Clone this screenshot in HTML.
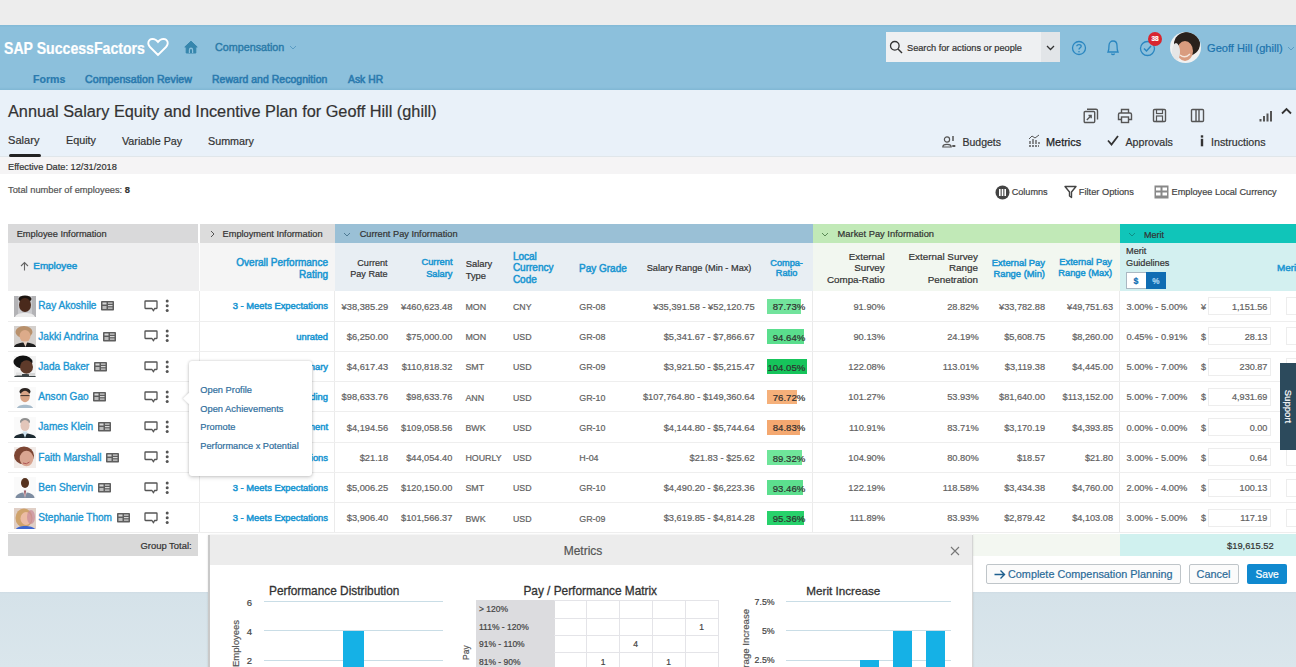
<!DOCTYPE html><html><head><meta charset="utf-8"><title>Compensation</title><style>
*{box-sizing:border-box;margin:0;padding:0}
html,body{width:1296px;height:667px;overflow:hidden;background:#fff;font-family:"Liberation Sans",sans-serif;color:#333}
.a{position:absolute;white-space:nowrap;-webkit-text-stroke:0.2px currentColor}
svg.a{overflow:visible}
</style></head><body>
<div class="a" style="left:0;top:0;width:1296px;height:25px;background:#ededed"></div>
<div class="a" style="left:0;top:25px;width:1296px;height:65px;background:linear-gradient(#82b9d6 0,#8cc0dc 2.5px,#8cc0dc 62px,#80b7d4 65px)"></div>
<div class="a " style="top:37.98px;font-size:16.5px;line-height:20.62px;color:#fff;font-weight:bold;left:4px;transform:scaleX(0.855);transform-origin:0 50%;">SAP SuccessFactors</div>
<svg class="a" style="left:147px;top:37px" width="22" height="20" viewBox="0 0 22 20"><path d="M11 18 L3 10 C0 7 1 2 5.5 1.8 C8 1.8 10 3.5 11 5 C12 3.5 14 1.8 16.5 1.8 C21 2 22 7 19 10 Z" fill="none" stroke="#fff" stroke-width="1.8"/></svg>
<svg class="a" style="left:184px;top:40px" width="14" height="14" viewBox="0 0 14 14"><path d="M0.8 7 L7 1.2 L13.2 7 L11.8 7 L11.8 13 L2.2 13 L2.2 7 Z" fill="#3686ad" stroke="#3686ad" stroke-width="1" stroke-linejoin="round"/><path d="M4.8 13 V10 Q4.8 7.6 7 7.6 Q9.2 7.6 9.2 10 V13 Z" fill="#8cc0dc"/><path d="M6 13 V10.2 Q6 9 7 9 Q8 9 8 10.2 V13 Z" fill="#3686ad"/></svg>
<div class="a " style="top:41.20px;font-size:10.75px;line-height:13.44px;color:#2a7aa8;left:215px;-webkit-text-stroke:0.4px #2a7aa8;">Compensation</div>
<svg class="a" style="left:289px;top:45px" width="8" height="5" viewBox="0 0 8 5"><path d="M1 1 L4 4 L7 1" fill="none" stroke="#5a9cc4" stroke-width="1"/></svg>
<div class="a " style="top:73.20px;font-size:10.6px;line-height:13.25px;color:#2a7aae;font-weight:bold;left:33px;">Forms</div>
<div class="a " style="top:73.20px;font-size:10.6px;line-height:13.25px;color:#2a7aae;left:85px;-webkit-text-stroke:0.55px #2a7aae;letter-spacing:0.05px;">Compensation Review</div>
<div class="a " style="top:73.29px;font-size:10.45px;line-height:13.06px;color:#2a7aae;left:212px;-webkit-text-stroke:0.55px #2a7aae;letter-spacing:0.05px;">Reward and Recognition</div>
<div class="a " style="top:73.98px;font-size:10.3px;line-height:12.88px;color:#2a7aae;left:348px;-webkit-text-stroke:0.55px #2a7aae;letter-spacing:0.05px;">Ask HR</div>
<div class="a" style="left:886px;top:32px;width:174px;height:30px;background:#eef0f2"></div>
<div class="a" style="left:1041px;top:32px;width:19px;height:30px;background:#e2e5e8"></div>
<svg class="a" style="left:889px;top:40px" width="14" height="14" viewBox="0 0 14 14"><circle cx="5.8" cy="5.8" r="4.3" fill="none" stroke="#333" stroke-width="1.3"/><path d="M9 9 L13 13" stroke="#333" stroke-width="1.5"/></svg>
<div class="a " style="top:42.96px;font-size:9.2px;line-height:11.5px;color:#333;left:907px;">Search for actions or people</div>
<svg class="a" style="left:1046px;top:44.5px" width="9" height="6" viewBox="0 0 9 6"><path d="M1 1 L4.5 4.5 L8 1" fill="none" stroke="#333" stroke-width="1.3"/></svg>
<svg class="a" style="left:1071px;top:39.5px" width="16" height="16" viewBox="0 0 16 16"><circle cx="8" cy="8" r="6.5" fill="none" stroke="#2a86c0" stroke-width="1.3"/><path d="M5.8 6.2 C5.8 4 10.2 4 10.2 6.2 C10.2 7.8 8 7.8 8 9.6" fill="none" stroke="#2a86c0" stroke-width="1.3"/><circle cx="8" cy="11.8" r="0.8" fill="#2a86c0"/></svg>
<svg class="a" style="left:1106px;top:39px" width="14" height="17" viewBox="0 0 14 17"><path d="M2 13 C3 11 3 9 3 6.5 C3 3.5 5 2 7 2 C9 2 11 3.5 11 6.5 C11 9 11 11 12 13 Z M5.5 14.5 C6 16 8 16 8.5 14.5" fill="none" stroke="#2a86c0" stroke-width="1.3"/></svg>
<svg class="a" style="left:1139px;top:39.5px" width="17" height="17" viewBox="0 0 17 17"><circle cx="8.5" cy="8.5" r="7" fill="none" stroke="#2a86c0" stroke-width="1.3"/><path d="M5 8.5 L7.5 11 L12 6" fill="none" stroke="#2a86c0" stroke-width="1.5"/></svg>
<div class="a" style="left:1148px;top:32px;width:14px;height:14px;border-radius:7px;background:#d9252f;color:#fff;font-size:6.5px;font-weight:bold;text-align:center;line-height:14px">38</div>
<svg class="a" style="left:1170px;top:32px" width="31" height="31" viewBox="0 0 31 31"><defs><clipPath id="cav"><circle cx="15.5" cy="15.5" r="15.5"/></clipPath></defs>
<g clip-path="url(#cav)"><rect width="31" height="31" fill="#f1f1f1"/><ellipse cx="17" cy="12" rx="13" ry="12" fill="#2a211c"/><ellipse cx="15" cy="19" rx="8" ry="10" fill="#d99c7f"/><path d="M10 23 Q15 27 20 22" stroke="#f5e6dc" stroke-width="1.6" fill="none"/><ellipse cx="6" cy="20" rx="4" ry="9" fill="#e6e6e6"/></g></svg>
<div class="a " style="top:41.79px;font-size:11.1px;line-height:13.88px;color:#1b73ad;left:1207px;">Geoff Hill (ghill)</div>
<svg class="a" style="left:1287px;top:46px" width="8" height="5" viewBox="0 0 8 5"><path d="M1 1 L4 4 L7 1" fill="none" stroke="#5a9cc4" stroke-width="1"/></svg>
<div class="a" style="left:0;top:90px;width:1296px;height:67px;background:#e9f1f9;border-bottom:1.5px solid #e0e6ea"></div>
<div class="a " style="top:101.10px;font-size:16.3px;line-height:20.38px;color:#333;left:8px;">Annual Salary Equity and Incentive Plan for Geoff Hill (ghill)</div>
<div class="a " style="top:134.29px;font-size:11.1px;line-height:13.88px;color:#333;left:8px;">Salary</div>
<div class="a " style="top:134.47px;font-size:10.8px;line-height:13.5px;color:#333;left:66px;">Equity</div>
<div class="a " style="top:134.50px;font-size:10.75px;line-height:13.44px;color:#333;left:122px;">Variable Pay</div>
<div class="a " style="top:134.50px;font-size:10.75px;line-height:13.44px;color:#333;left:208px;">Summary</div>
<div class="a" style="left:0;top:157px;width:1296px;height:17px;background:#f5f4f5"></div>
<div class="a" style="left:8.5px;top:154px;width:32px;height:3px;border-radius:1.5px;background:#222"></div>
<div class="a " style="top:161.72px;font-size:9.26px;line-height:11.57px;color:#333;left:8px;">Effective Date: 12/31/2018</div>
<div class="a " style="top:185.30px;font-size:9.3px;line-height:11.62px;color:#555;left:8px;">Total number of employees: <b style="color:#333">8</b></div>

<svg class="a" style="left:1083px;top:108px" width="16" height="16" viewBox="0 0 16 16"><rect x="1.2" y="3.5" width="10.5" height="11" rx="1" fill="none" stroke="#555" stroke-width="1.4"/><path d="M4 1.2 H13 Q14.5 1.2 14.5 2.7 V11.5" fill="none" stroke="#555" stroke-width="1.4"/><path d="M3.8 12 L8 7.8 M5.5 7.5 H8.2 V10.2" fill="none" stroke="#555" stroke-width="1.3"/></svg>
<svg class="a" style="left:1117px;top:108px" width="16" height="16" viewBox="0 0 16 16"><path d="M4.5 5 V1.5 H11.5 V5" fill="none" stroke="#555" stroke-width="1.4"/><path d="M4 11.5 H1.5 V6.5 Q1.5 5 3 5 H13 Q14.5 5 14.5 6.5 V11.5 H12" fill="none" stroke="#555" stroke-width="1.4"/><rect x="4.5" y="9" width="7" height="5.5" fill="none" stroke="#555" stroke-width="1.4"/></svg>
<svg class="a" style="left:1152px;top:108px" width="15" height="15" viewBox="0 0 15 15"><rect x="1.5" y="1.5" width="12" height="12" rx="1" fill="none" stroke="#555" stroke-width="1.4"/><rect x="4.5" y="1.5" width="6" height="4" fill="none" stroke="#555" stroke-width="1.2"/><rect x="4.5" y="8" width="6" height="5.5" fill="none" stroke="#555" stroke-width="1.2"/></svg>
<svg class="a" style="left:1190px;top:108px" width="15" height="15" viewBox="0 0 15 15"><rect x="1.5" y="1.5" width="12" height="12" rx="1" fill="none" stroke="#555" stroke-width="1.4"/><path d="M6 2 V13 M9 2 V13" fill="none" stroke="#555" stroke-width="1.4"/></svg>
<svg class="a" style="left:1259px;top:110px" width="13" height="12" viewBox="0 0 13 12"><rect x="0.5" y="9" width="2" height="2.5" fill="#555"/><rect x="4" y="6" width="2" height="5.5" fill="#555"/><rect x="7.5" y="3.5" width="2" height="8" fill="#555"/><rect x="11" y="1" width="2" height="10.5" fill="#555"/></svg>
<svg class="a" style="left:1281px;top:107px" width="11" height="8" viewBox="0 0 11 8"><path d="M1 6.5 L5.5 2 L10 6.5" fill="none" stroke="#333" stroke-width="1.8"/></svg>
<svg class="a" style="left:942px;top:135px" width="14" height="13" viewBox="0 0 14 13"><circle cx="5" cy="4.5" r="2.6" fill="none" stroke="#555" stroke-width="1.2"/><path d="M0.8 12 C0.8 8.5 9.2 8.5 9.2 12 Z" fill="none" stroke="#555" stroke-width="1.2"/><path d="M11 1 V6" stroke="#555" stroke-width="1.5"/><rect x="10.3" y="10" width="3" height="2" fill="#555"/></svg>
<svg class="a" style="left:1027px;top:134px" width="14" height="14" viewBox="0 0 14 14"><path d="M2 12 H12" stroke="#555" stroke-width="1.5" stroke-dasharray="2 1"/><path d="M3 10 L3 7 M6 10 L6 5 M9 10 L9 6 M12 10 L12 8" stroke="#555" stroke-width="1.3"/><path d="M2 5 L5 2 L8 4 L12 1" fill="none" stroke="#555" stroke-width="1"/></svg>
<svg class="a" style="left:1107px;top:135px" width="12" height="11" viewBox="0 0 12 11"><path d="M1 5.5 L4.5 9.5 L11 1" fill="none" stroke="#333" stroke-width="1.8"/></svg>
<svg class="a" style="left:1199px;top:135px" width="6" height="12" viewBox="0 0 6 12"><rect x="1.8" y="0.3" width="2.4" height="2.3" fill="#333"/><rect x="1.8" y="3.8" width="2.4" height="7.5" fill="#333"/></svg>
<svg class="a" style="left:995px;top:185px" width="15" height="15" viewBox="0 0 15 15"><circle cx="7.5" cy="7.5" r="7" fill="#444"/><rect x="4" y="4" width="1.6" height="7" fill="#fff"/><rect x="6.7" y="4" width="1.6" height="7" fill="#fff"/><rect x="9.4" y="4" width="1.6" height="7" fill="#fff"/></svg>
<svg class="a" style="left:1064px;top:185px" width="13" height="14" viewBox="0 0 13 14"><path d="M1 1.5 H12 L7.5 7 V12.5 L5.5 11 V7 Z" fill="none" stroke="#444" stroke-width="1.4" stroke-linejoin="round"/></svg>
<svg class="a" style="left:1154px;top:185px" width="15" height="14" viewBox="0 0 15 14"><rect x="0.5" y="0.5" width="14" height="13" fill="#888"/><rect x="2" y="2.5" width="4.5" height="3" fill="#fff"/><rect x="8.5" y="2.5" width="4.5" height="3" fill="#fff"/><rect x="2" y="7.5" width="4.5" height="3" fill="#fff"/><rect x="8.5" y="7.5" width="4.5" height="3" fill="#fff"/></svg>

<div class="a " style="top:136.16px;font-size:10.5px;line-height:13.12px;color:#333;left:962.5px;">Budgets</div>
<div class="a " style="top:135.92px;font-size:10.9px;line-height:13.62px;color:#222;left:1046px;-webkit-text-stroke:0.25px #222;">Metrics</div>
<div class="a " style="top:136.05px;font-size:10.68px;line-height:13.35px;color:#333;left:1125.5px;">Approvals</div>
<div class="a " style="top:136.05px;font-size:10.68px;line-height:13.35px;color:#333;left:1211px;">Instructions</div>
<div class="a " style="top:187.20px;font-size:9.12px;line-height:11.4px;color:#444;left:1011.7px;">Columns</div>
<div class="a " style="top:187.11px;font-size:9.28px;line-height:11.6px;color:#444;left:1078.8px;">Filter Options</div>
<div class="a " style="top:187.16px;font-size:9.2px;line-height:11.5px;color:#444;left:1171.5px;">Employee Local Currency</div>
<div class="a" style="left:8px;top:224px;width:190px;height:19px;background:#d9d9da"></div>
<div class="a" style="left:199px;top:224px;width:136px;height:19px;background:#dcdcdc"></div>
<div class="a" style="left:335px;top:224px;width:478px;height:19px;background:#9ac0d6"></div>
<div class="a" style="left:813px;top:224px;width:307px;height:19px;background:#c1e9b7"></div>
<div class="a" style="left:1120px;top:224px;width:176px;height:19px;background:#10c5b9"></div>
<div class="a " style="top:229.43px;font-size:9.25px;line-height:11.56px;color:#333;left:16.7px;">Employee Information</div>
<div class="a " style="top:229.44px;font-size:9.23px;line-height:11.54px;color:#333;left:222.6px;">Employment Information</div>
<div class="a " style="top:229.44px;font-size:9.23px;line-height:11.54px;color:#333;left:359.7px;">Current Pay Information</div>
<div class="a " style="top:229.38px;font-size:9.33px;line-height:11.66px;color:#333;left:837.6px;">Market Pay Information</div>
<div class="a " style="top:229.58px;font-size:9.0px;line-height:11.25px;color:#333;left:1144px;">Merit</div>
<svg class="a" style="left:209.5px;top:230px" width="5" height="8" viewBox="0 0 5 8"><path d="M1 1 L4 4 L1 7" fill="none" stroke="#555" stroke-width="1"/></svg>
<svg class="a" style="left:343px;top:231.5px" width="8" height="5" viewBox="0 0 8 5"><path d="M1 1 L4 4 L7 1" fill="none" stroke="#4d7a94" stroke-width="1"/></svg>
<svg class="a" style="left:821px;top:231.5px" width="8" height="5" viewBox="0 0 8 5"><path d="M1 1 L4 4 L7 1" fill="none" stroke="#5a8a55" stroke-width="1"/></svg>
<svg class="a" style="left:1128px;top:231.5px" width="8" height="5" viewBox="0 0 8 5"><path d="M1 1 L4 4 L7 1" fill="none" stroke="#0d8f86" stroke-width="1"/></svg>
<div class="a" style="left:8px;top:243px;width:191px;height:48px;background:#efeff0"></div>
<div class="a" style="left:199px;top:243px;width:136px;height:48px;background:#f5f5f5"></div>
<div class="a" style="left:335px;top:243px;width:478px;height:48px;background:#e8eef3"></div>
<div class="a" style="left:813px;top:243px;width:307px;height:48px;background:#f2f7f0"></div>
<div class="a" style="left:1120px;top:243px;width:176px;height:48px;background:#d3f0f0"></div>
<div class="a" style="left:198.5px;top:224px;width:1px;height:67px;background:#fff"></div>
<svg class="a" style="left:20px;top:261px" width="9" height="10" viewBox="0 0 9 10"><path d="M4.5 9.5 V1.5 M1 5 L4.5 1.5 L8 5" fill="none" stroke="#666" stroke-width="1.1"/></svg>
<div class="a " style="top:260.32px;font-size:9.9px;line-height:12.38px;color:#1a96d2;left:33.3px;-webkit-text-stroke:0.5px #1a96d2;">Employee</div>
<div class="a " style="top:256.97px;font-size:10.0px;line-height:12.5px;color:#1a96d2;right:968.00px;text-align:right;-webkit-text-stroke:0.5px #1a96d2;">Overall Performance</div>
<div class="a " style="top:268.57px;font-size:10.0px;line-height:12.5px;color:#1a96d2;right:968.00px;text-align:right;-webkit-text-stroke:0.5px #1a96d2;">Rating</div>
<div class="a " style="top:257.51px;font-size:9.1px;line-height:11.38px;color:#333;right:908.40px;text-align:right;">Current</div>
<div class="a " style="top:269.11px;font-size:9.1px;line-height:11.38px;color:#333;right:908.40px;text-align:right;">Pay Rate</div>
<div class="a " style="top:257.40px;font-size:9.3px;line-height:11.62px;color:#1a96d2;right:843.50px;text-align:right;-webkit-text-stroke:0.5px #1a96d2;">Current</div>
<div class="a " style="top:269.00px;font-size:9.3px;line-height:11.62px;color:#1a96d2;right:843.50px;text-align:right;-webkit-text-stroke:0.5px #1a96d2;">Salary</div>
<div class="a " style="top:257.63px;font-size:9.4px;line-height:11.75px;color:#333;left:465.7px;">Salary</div>
<div class="a " style="top:269.63px;font-size:9.4px;line-height:11.75px;color:#333;left:465.7px;">Type</div>
<div class="a " style="top:250.66px;font-size:10.0px;line-height:12.5px;color:#1a96d2;left:512.9px;-webkit-text-stroke:0.5px #1a96d2;">Local</div>
<div class="a " style="top:262.17px;font-size:10.0px;line-height:12.5px;color:#1a96d2;left:512.9px;-webkit-text-stroke:0.5px #1a96d2;">Currency</div>
<div class="a " style="top:273.67px;font-size:10.0px;line-height:12.5px;color:#1a96d2;left:512.9px;-webkit-text-stroke:0.5px #1a96d2;">Code</div>
<div class="a " style="top:262.97px;font-size:10.0px;line-height:12.5px;color:#1a96d2;left:579px;-webkit-text-stroke:0.5px #1a96d2;">Pay Grade</div>
<div class="a " style="top:263.46px;font-size:9.2px;line-height:11.5px;color:#333;right:544.60px;text-align:right;">Salary Range (Min - Max)</div>
<div class="a " style="top:257.76px;font-size:9.2px;line-height:11.5px;color:#1a96d2;left:636.60px;width:300px;text-align:center;-webkit-text-stroke:0.5px #1a96d2;">Compa-</div>
<div class="a " style="top:268.46px;font-size:9.2px;line-height:11.5px;color:#1a96d2;left:636.60px;width:300px;text-align:center;-webkit-text-stroke:0.5px #1a96d2;">Ratio</div>
<div class="a " style="top:250.59px;font-size:9.8px;line-height:12.25px;color:#333;right:411.30px;text-align:right;">External</div>
<div class="a " style="top:262.09px;font-size:9.8px;line-height:12.25px;color:#333;right:411.30px;text-align:right;">Survey</div>
<div class="a " style="top:273.59px;font-size:9.8px;line-height:12.25px;color:#333;right:411.30px;text-align:right;">Compa-Ratio</div>
<div class="a " style="top:250.56px;font-size:9.85px;line-height:12.31px;color:#333;right:318.00px;text-align:right;">External Survey</div>
<div class="a " style="top:262.06px;font-size:9.85px;line-height:12.31px;color:#333;right:318.00px;text-align:right;">Range</div>
<div class="a " style="top:273.56px;font-size:9.85px;line-height:12.31px;color:#333;right:318.00px;text-align:right;">Penetration</div>
<div class="a " style="top:256.63px;font-size:9.4px;line-height:11.75px;color:#1a96d2;right:251.00px;text-align:right;-webkit-text-stroke:0.5px #1a96d2;">External Pay</div>
<div class="a " style="top:267.93px;font-size:9.4px;line-height:11.75px;color:#1a96d2;right:251.00px;text-align:right;-webkit-text-stroke:0.5px #1a96d2;">Range (Min)</div>
<div class="a " style="top:256.70px;font-size:9.3px;line-height:11.62px;color:#1a96d2;right:184.00px;text-align:right;-webkit-text-stroke:0.5px #1a96d2;">External Pay</div>
<div class="a " style="top:268.00px;font-size:9.3px;line-height:11.62px;color:#1a96d2;right:184.00px;text-align:right;-webkit-text-stroke:0.5px #1a96d2;">Range (Max)</div>
<div class="a " style="top:246.46px;font-size:9.2px;line-height:11.5px;color:#333;left:1126px;">Merit</div>
<div class="a " style="top:257.76px;font-size:9.2px;line-height:11.5px;color:#333;left:1126px;">Guidelines</div>
<div class="a " style="top:262.02px;font-size:9.9px;line-height:12.38px;color:#1a96d2;left:1277px;-webkit-text-stroke:0.5px #1a96d2;">Merit</div>
<div class="a" style="left:1126px;top:272px;width:40px;height:17px;border:1px solid #aab8c2;background:#fff"></div>
<div class="a" style="left:1146px;top:272px;width:20px;height:17px;background:#0f6db3"></div>
<div class="a " style="top:276.20px;font-size:8.8px;line-height:11.0px;color:#0f6db3;font-weight:bold;left:986.00px;width:300px;text-align:center;">$</div>
<div class="a " style="top:276.57px;font-size:8.2px;line-height:10.25px;color:#a8d4f0;font-weight:bold;left:1006.00px;width:300px;text-align:center;">%</div>
<div class="a" style="left:199px;top:291px;width:1px;height:242.00px;background:#ebebeb"></div>
<div class="a" style="left:334px;top:291px;width:1px;height:242.00px;background:#ebebeb"></div>
<div class="a" style="left:812px;top:291px;width:1px;height:242.00px;background:#ebebeb"></div>
<div class="a" style="left:1119px;top:291px;width:1px;height:242.00px;background:#ebebeb"></div>
<div class="a" style="left:8px;top:320.65px;width:1288px;height:1px;background:#eeeeee"></div>
<svg class="a" style="left:14px;top:295.82px" width="22" height="21" viewBox="0 0 22 21"><rect width="22" height="21" fill="#b3b3b6"/><rect x="4" y="0" width="14" height="21" fill="#c9c9cc"/><ellipse cx="11" cy="3" rx="6.5" ry="3.5" fill="#1c1410"/><ellipse cx="11" cy="9" rx="6" ry="7" fill="#4a2a1c"/><path d="M1 21 C2 15.5 20 15.5 21 21 Z" fill="#ececec"/></svg>
<div class="a " style="top:300.25px;font-size:10.07px;line-height:12.59px;color:#1a96d2;left:38.3px;-webkit-text-stroke:0.35px #1a96d2;">Ray Akoshile</div>
<svg class="a" style="left:101.01px;top:301.32px" width="13" height="10" viewBox="0 0 13 10"><rect x="0" y="0" width="13" height="9.5" rx="0.8" fill="#5e5e5e"/><rect x="1.5" y="1.5" width="4" height="2" fill="#d8d8d8"/><rect x="1.5" y="5" width="4" height="3" fill="#bdbdbd"/><rect x="7" y="1.5" width="4.5" height="1.2" fill="#d8d8d8"/><rect x="7" y="4" width="4.5" height="1.2" fill="#d8d8d8"/><rect x="7" y="6.5" width="4.5" height="1.2" fill="#d8d8d8"/></svg>
<svg class="a" style="left:143.5px;top:300.12px" width="14" height="12" viewBox="0 0 14 12"><path d="M1.5 1 H12.5 Q13 1 13 1.5 V8 Q13 8.5 12.5 8.5 H10.5 L9.5 10.8 L8 8.5 H1.5 Q1 8.5 1 8 V1.5 Q1 1 1.5 1 Z" fill="none" stroke="#555" stroke-width="1.3" stroke-linejoin="round"/></svg>
<svg class="a" style="left:164.5px;top:299.12px" width="5" height="14" viewBox="0 0 5 14"><circle cx="2.2" cy="2" r="1.5" fill="#555"/><circle cx="2.2" cy="6.7" r="1.5" fill="#555"/><circle cx="2.2" cy="11.4" r="1.5" fill="#555"/></svg>
<div class="a " style="top:301.48px;font-size:9.37px;line-height:11.71px;color:#1a96d2;right:968.00px;text-align:right;-webkit-text-stroke:0.5px #1a96d2;">3 - Meets Expectations</div>
<div class="a " style="top:301.52px;font-size:9.3px;line-height:11.62px;color:#626262;right:907.90px;text-align:right;">¥38,385.29</div>
<div class="a " style="top:301.57px;font-size:9.22px;line-height:11.53px;color:#626262;right:843.70px;text-align:right;">¥460,623.48</div>
<div class="a " style="top:301.77px;font-size:8.9px;line-height:11.12px;color:#626262;left:465.4px;">MON</div>
<div class="a " style="top:301.83px;font-size:8.8px;line-height:11.0px;color:#626262;left:513px;">CNY</div>
<div class="a " style="top:301.77px;font-size:8.9px;line-height:11.12px;color:#626262;left:579.3px;">GR-08</div>
<div class="a " style="top:301.52px;font-size:9.3px;line-height:11.62px;color:#626262;right:541.40px;text-align:right;">¥35,391.58 - ¥52,120.75</div>
<div class="a" style="left:766.8px;top:298.82px;width:34.4px;height:14.8px;background:#72e39c"></div>
<div class="a " style="top:301.34px;font-size:9.6px;line-height:12.0px;color:#2f2f2f;right:490.70px;text-align:right;">87.73%</div>
<div class="a " style="top:301.52px;font-size:9.3px;line-height:11.62px;color:#626262;right:411.00px;text-align:right;">91.90%</div>
<div class="a " style="top:301.52px;font-size:9.3px;line-height:11.62px;color:#626262;right:317.30px;text-align:right;">28.82%</div>
<div class="a " style="top:301.58px;font-size:9.2px;line-height:11.5px;color:#626262;right:251.00px;text-align:right;">¥33,782.88</div>
<div class="a " style="top:301.58px;font-size:9.2px;line-height:11.5px;color:#626262;right:183.00px;text-align:right;">¥49,751.63</div>
<div class="a " style="top:301.52px;font-size:9.3px;line-height:11.62px;color:#626262;left:1126.4px;">3.00% - 5.00%</div>
<div class="a " style="top:301.70px;font-size:9.0px;line-height:11.25px;color:#626262;left:1201px;">¥</div>
<div class="a" style="left:1208px;top:297.12px;width:63px;height:18px;border:1px solid #ededed;background:#fff"></div>
<div class="a " style="top:301.64px;font-size:9.1px;line-height:11.38px;color:#626262;right:28.60px;text-align:right;">1,151.56</div>
<div class="a" style="left:1286px;top:297.12px;width:20px;height:18px;border:1px solid #ededed;background:#fff"></div>
<div class="a" style="left:8px;top:350.90px;width:1288px;height:1px;background:#eeeeee"></div>
<svg class="a" style="left:14px;top:326.07px" width="22" height="21" viewBox="0 0 22 21"><rect width="22" height="21" fill="#d4d0cd"/><ellipse cx="10" cy="6" rx="8.5" ry="6" fill="#b9916c"/><ellipse cx="11" cy="10" rx="5.5" ry="6" fill="#dcab8a"/><path d="M0 21 C1 15 21 15 22 21 Z" fill="#1f1f1f"/><path d="M9 15.5 L11.5 21 L13.5 15.5 Z" fill="#e6d2c4"/></svg>
<div class="a " style="top:330.50px;font-size:10.07px;line-height:12.59px;color:#1a96d2;left:38.3px;-webkit-text-stroke:0.35px #1a96d2;">Jakki Andrina</div>
<svg class="a" style="left:102.69px;top:331.57px" width="13" height="10" viewBox="0 0 13 10"><rect x="0" y="0" width="13" height="9.5" rx="0.8" fill="#5e5e5e"/><rect x="1.5" y="1.5" width="4" height="2" fill="#d8d8d8"/><rect x="1.5" y="5" width="4" height="3" fill="#bdbdbd"/><rect x="7" y="1.5" width="4.5" height="1.2" fill="#d8d8d8"/><rect x="7" y="4" width="4.5" height="1.2" fill="#d8d8d8"/><rect x="7" y="6.5" width="4.5" height="1.2" fill="#d8d8d8"/></svg>
<svg class="a" style="left:143.5px;top:330.38px" width="14" height="12" viewBox="0 0 14 12"><path d="M1.5 1 H12.5 Q13 1 13 1.5 V8 Q13 8.5 12.5 8.5 H10.5 L9.5 10.8 L8 8.5 H1.5 Q1 8.5 1 8 V1.5 Q1 1 1.5 1 Z" fill="none" stroke="#555" stroke-width="1.3" stroke-linejoin="round"/></svg>
<svg class="a" style="left:164.5px;top:329.38px" width="5" height="14" viewBox="0 0 5 14"><circle cx="2.2" cy="2" r="1.5" fill="#555"/><circle cx="2.2" cy="6.7" r="1.5" fill="#555"/><circle cx="2.2" cy="11.4" r="1.5" fill="#555"/></svg>
<div class="a " style="top:331.73px;font-size:9.37px;line-height:11.71px;color:#1a96d2;right:968.00px;text-align:right;-webkit-text-stroke:0.5px #1a96d2;">unrated</div>
<div class="a " style="top:331.77px;font-size:9.3px;line-height:11.62px;color:#626262;right:907.90px;text-align:right;">$6,250.00</div>
<div class="a " style="top:331.82px;font-size:9.22px;line-height:11.53px;color:#626262;right:843.70px;text-align:right;">$75,000.00</div>
<div class="a " style="top:332.02px;font-size:8.9px;line-height:11.12px;color:#626262;left:465.4px;">MON</div>
<div class="a " style="top:332.08px;font-size:8.8px;line-height:11.0px;color:#626262;left:513px;">USD</div>
<div class="a " style="top:332.02px;font-size:8.9px;line-height:11.12px;color:#626262;left:579.3px;">GR-08</div>
<div class="a " style="top:331.77px;font-size:9.3px;line-height:11.62px;color:#626262;right:541.40px;text-align:right;">$5,341.67 - $7,866.67</div>
<div class="a" style="left:766.8px;top:329.07px;width:37.1px;height:14.8px;background:#5ade8d"></div>
<div class="a " style="top:331.59px;font-size:9.6px;line-height:12.0px;color:#2f2f2f;right:490.70px;text-align:right;">94.64%</div>
<div class="a " style="top:331.77px;font-size:9.3px;line-height:11.62px;color:#626262;right:411.00px;text-align:right;">90.13%</div>
<div class="a " style="top:331.77px;font-size:9.3px;line-height:11.62px;color:#626262;right:317.30px;text-align:right;">24.19%</div>
<div class="a " style="top:331.83px;font-size:9.2px;line-height:11.5px;color:#626262;right:251.00px;text-align:right;">$5,608.75</div>
<div class="a " style="top:331.83px;font-size:9.2px;line-height:11.5px;color:#626262;right:183.00px;text-align:right;">$8,260.00</div>
<div class="a " style="top:331.77px;font-size:9.3px;line-height:11.62px;color:#626262;left:1126.4px;">0.45% - 0.91%</div>
<div class="a " style="top:331.95px;font-size:9.0px;line-height:11.25px;color:#626262;left:1201px;">$</div>
<div class="a" style="left:1208px;top:327.38px;width:63px;height:18px;border:1px solid #ededed;background:#fff"></div>
<div class="a " style="top:331.89px;font-size:9.1px;line-height:11.38px;color:#626262;right:28.60px;text-align:right;">28.13</div>
<div class="a" style="left:1286px;top:327.38px;width:20px;height:18px;border:1px solid #ededed;background:#fff"></div>
<div class="a" style="left:8px;top:381.15px;width:1288px;height:1px;background:#eeeeee"></div>
<svg class="a" style="left:14px;top:356.32px" width="22" height="21" viewBox="0 0 22 21"><rect width="22" height="21" fill="#f2f2f2"/><ellipse cx="9" cy="6" rx="9.5" ry="6.5" fill="#121212"/><ellipse cx="12.5" cy="11" rx="6.5" ry="6.8" fill="#5e3a2a"/><path d="M0 21 C2 17 20 17 22 21 Z" fill="#3a4244"/><rect x="2" y="16.5" width="6" height="3" fill="#e2e2e2"/><rect x="15" y="17" width="6" height="3" fill="#d5d5d5"/></svg>
<div class="a " style="top:360.75px;font-size:10.07px;line-height:12.59px;color:#1a96d2;left:38.3px;-webkit-text-stroke:0.35px #1a96d2;">Jada Baker</div>
<svg class="a" style="left:93.74px;top:361.82px" width="13" height="10" viewBox="0 0 13 10"><rect x="0" y="0" width="13" height="9.5" rx="0.8" fill="#5e5e5e"/><rect x="1.5" y="1.5" width="4" height="2" fill="#d8d8d8"/><rect x="1.5" y="5" width="4" height="3" fill="#bdbdbd"/><rect x="7" y="1.5" width="4.5" height="1.2" fill="#d8d8d8"/><rect x="7" y="4" width="4.5" height="1.2" fill="#d8d8d8"/><rect x="7" y="6.5" width="4.5" height="1.2" fill="#d8d8d8"/></svg>
<svg class="a" style="left:143.5px;top:360.62px" width="14" height="12" viewBox="0 0 14 12"><path d="M1.5 1 H12.5 Q13 1 13 1.5 V8 Q13 8.5 12.5 8.5 H10.5 L9.5 10.8 L8 8.5 H1.5 Q1 8.5 1 8 V1.5 Q1 1 1.5 1 Z" fill="none" stroke="#555" stroke-width="1.3" stroke-linejoin="round"/></svg>
<svg class="a" style="left:164.5px;top:359.62px" width="5" height="14" viewBox="0 0 5 14"><circle cx="2.2" cy="2" r="1.5" fill="#555"/><circle cx="2.2" cy="6.7" r="1.5" fill="#555"/><circle cx="2.2" cy="11.4" r="1.5" fill="#555"/></svg>
<div class="a " style="top:361.98px;font-size:9.37px;line-height:11.71px;color:#1a96d2;right:968.00px;text-align:right;-webkit-text-stroke:0.5px #1a96d2;">5 - Extraordinary</div>
<div class="a " style="top:362.02px;font-size:9.3px;line-height:11.62px;color:#626262;right:907.90px;text-align:right;">$4,617.43</div>
<div class="a " style="top:362.07px;font-size:9.22px;line-height:11.53px;color:#626262;right:843.70px;text-align:right;">$110,818.32</div>
<div class="a " style="top:362.27px;font-size:8.9px;line-height:11.12px;color:#626262;left:465.4px;">SMT</div>
<div class="a " style="top:362.33px;font-size:8.8px;line-height:11.0px;color:#626262;left:513px;">USD</div>
<div class="a " style="top:362.27px;font-size:8.9px;line-height:11.12px;color:#626262;left:579.3px;">GR-09</div>
<div class="a " style="top:362.02px;font-size:9.3px;line-height:11.62px;color:#626262;right:541.40px;text-align:right;">$3,921.50 - $5,215.47</div>
<div class="a" style="left:766.8px;top:359.32px;width:40.5px;height:14.8px;background:#16c45b"></div>
<div class="a " style="top:361.84px;font-size:9.6px;line-height:12.0px;color:#2f2f2f;right:490.70px;text-align:right;">104.05%</div>
<div class="a " style="top:362.02px;font-size:9.3px;line-height:11.62px;color:#626262;right:411.00px;text-align:right;">122.08%</div>
<div class="a " style="top:362.02px;font-size:9.3px;line-height:11.62px;color:#626262;right:317.30px;text-align:right;">113.01%</div>
<div class="a " style="top:362.08px;font-size:9.2px;line-height:11.5px;color:#626262;right:251.00px;text-align:right;">$3,119.38</div>
<div class="a " style="top:362.08px;font-size:9.2px;line-height:11.5px;color:#626262;right:183.00px;text-align:right;">$4,445.00</div>
<div class="a " style="top:362.02px;font-size:9.3px;line-height:11.62px;color:#626262;left:1126.4px;">5.00% - 7.00%</div>
<div class="a " style="top:362.20px;font-size:9.0px;line-height:11.25px;color:#626262;left:1201px;">$</div>
<div class="a" style="left:1208px;top:357.62px;width:63px;height:18px;border:1px solid #ededed;background:#fff"></div>
<div class="a " style="top:362.14px;font-size:9.1px;line-height:11.38px;color:#626262;right:28.60px;text-align:right;">230.87</div>
<div class="a" style="left:1286px;top:357.62px;width:20px;height:18px;border:1px solid #ededed;background:#fff"></div>
<div class="a" style="left:8px;top:411.40px;width:1288px;height:1px;background:#eeeeee"></div>
<svg class="a" style="left:14px;top:386.57px" width="22" height="21" viewBox="0 0 22 21"><rect width="22" height="21" fill="#fafafa"/><ellipse cx="11" cy="4.5" rx="5.5" ry="3.6" fill="#2b2421"/><ellipse cx="11" cy="9.5" rx="4.8" ry="5.8" fill="#d9a486"/><rect x="6.5" y="8" width="9" height="1.1" fill="#4a3a33"/><path d="M3 21 C4 16.5 18 16.5 19 21 Z" fill="#a8bccb"/></svg>
<div class="a " style="top:391.00px;font-size:10.07px;line-height:12.59px;color:#1a96d2;left:38.3px;-webkit-text-stroke:0.35px #1a96d2;">Anson Gao</div>
<svg class="a" style="left:93.18px;top:392.07px" width="13" height="10" viewBox="0 0 13 10"><rect x="0" y="0" width="13" height="9.5" rx="0.8" fill="#5e5e5e"/><rect x="1.5" y="1.5" width="4" height="2" fill="#d8d8d8"/><rect x="1.5" y="5" width="4" height="3" fill="#bdbdbd"/><rect x="7" y="1.5" width="4.5" height="1.2" fill="#d8d8d8"/><rect x="7" y="4" width="4.5" height="1.2" fill="#d8d8d8"/><rect x="7" y="6.5" width="4.5" height="1.2" fill="#d8d8d8"/></svg>
<svg class="a" style="left:143.5px;top:390.88px" width="14" height="12" viewBox="0 0 14 12"><path d="M1.5 1 H12.5 Q13 1 13 1.5 V8 Q13 8.5 12.5 8.5 H10.5 L9.5 10.8 L8 8.5 H1.5 Q1 8.5 1 8 V1.5 Q1 1 1.5 1 Z" fill="none" stroke="#555" stroke-width="1.3" stroke-linejoin="round"/></svg>
<svg class="a" style="left:164.5px;top:389.88px" width="5" height="14" viewBox="0 0 5 14"><circle cx="2.2" cy="2" r="1.5" fill="#555"/><circle cx="2.2" cy="6.7" r="1.5" fill="#555"/><circle cx="2.2" cy="11.4" r="1.5" fill="#555"/></svg>
<div class="a " style="top:392.23px;font-size:9.37px;line-height:11.71px;color:#1a96d2;right:968.00px;text-align:right;-webkit-text-stroke:0.5px #1a96d2;">4 - Outstanding</div>
<div class="a " style="top:392.27px;font-size:9.3px;line-height:11.62px;color:#626262;right:907.90px;text-align:right;">$98,633.76</div>
<div class="a " style="top:392.32px;font-size:9.22px;line-height:11.53px;color:#626262;right:843.70px;text-align:right;">$98,633.76</div>
<div class="a " style="top:392.52px;font-size:8.9px;line-height:11.12px;color:#626262;left:465.4px;">ANN</div>
<div class="a " style="top:392.58px;font-size:8.8px;line-height:11.0px;color:#626262;left:513px;">USD</div>
<div class="a " style="top:392.52px;font-size:8.9px;line-height:11.12px;color:#626262;left:579.3px;">GR-10</div>
<div class="a " style="top:392.27px;font-size:9.3px;line-height:11.62px;color:#626262;right:541.40px;text-align:right;">$107,764.80 - $149,360.64</div>
<div class="a" style="left:766.8px;top:389.57px;width:30.1px;height:14.8px;background:#f5b07a"></div>
<div class="a " style="top:392.09px;font-size:9.6px;line-height:12.0px;color:#2f2f2f;right:490.70px;text-align:right;">76.72%</div>
<div class="a " style="top:392.27px;font-size:9.3px;line-height:11.62px;color:#626262;right:411.00px;text-align:right;">101.27%</div>
<div class="a " style="top:392.27px;font-size:9.3px;line-height:11.62px;color:#626262;right:317.30px;text-align:right;">53.93%</div>
<div class="a " style="top:392.33px;font-size:9.2px;line-height:11.5px;color:#626262;right:251.00px;text-align:right;">$81,640.00</div>
<div class="a " style="top:392.33px;font-size:9.2px;line-height:11.5px;color:#626262;right:183.00px;text-align:right;">$113,152.00</div>
<div class="a " style="top:392.27px;font-size:9.3px;line-height:11.62px;color:#626262;left:1126.4px;">5.00% - 7.00%</div>
<div class="a " style="top:392.45px;font-size:9.0px;line-height:11.25px;color:#626262;left:1201px;">$</div>
<div class="a" style="left:1208px;top:387.88px;width:63px;height:18px;border:1px solid #ededed;background:#fff"></div>
<div class="a " style="top:392.39px;font-size:9.1px;line-height:11.38px;color:#626262;right:28.60px;text-align:right;">4,931.69</div>
<div class="a" style="left:1286px;top:387.88px;width:20px;height:18px;border:1px solid #ededed;background:#fff"></div>
<div class="a" style="left:8px;top:441.65px;width:1288px;height:1px;background:#eeeeee"></div>
<svg class="a" style="left:14px;top:416.82px" width="22" height="21" viewBox="0 0 22 21"><rect width="22" height="21" fill="#fafafa"/><ellipse cx="11" cy="4.5" rx="5" ry="3.5" fill="#8f8f8f"/><ellipse cx="11" cy="8.5" rx="4.5" ry="5.5" fill="#e2c6ba"/><path d="M0 21 C1 15 21 15 22 21 Z" fill="#1d2a31"/><path d="M8.5 14.5 L11 21 L13.5 14.5 Z" fill="#cfe3ef"/></svg>
<div class="a " style="top:421.25px;font-size:10.07px;line-height:12.59px;color:#1a96d2;left:38.3px;-webkit-text-stroke:0.35px #1a96d2;">James Klein</div>
<svg class="a" style="left:97.65px;top:422.32px" width="13" height="10" viewBox="0 0 13 10"><rect x="0" y="0" width="13" height="9.5" rx="0.8" fill="#5e5e5e"/><rect x="1.5" y="1.5" width="4" height="2" fill="#d8d8d8"/><rect x="1.5" y="5" width="4" height="3" fill="#bdbdbd"/><rect x="7" y="1.5" width="4.5" height="1.2" fill="#d8d8d8"/><rect x="7" y="4" width="4.5" height="1.2" fill="#d8d8d8"/><rect x="7" y="6.5" width="4.5" height="1.2" fill="#d8d8d8"/></svg>
<svg class="a" style="left:143.5px;top:421.12px" width="14" height="12" viewBox="0 0 14 12"><path d="M1.5 1 H12.5 Q13 1 13 1.5 V8 Q13 8.5 12.5 8.5 H10.5 L9.5 10.8 L8 8.5 H1.5 Q1 8.5 1 8 V1.5 Q1 1 1.5 1 Z" fill="none" stroke="#555" stroke-width="1.3" stroke-linejoin="round"/></svg>
<svg class="a" style="left:164.5px;top:420.12px" width="5" height="14" viewBox="0 0 5 14"><circle cx="2.2" cy="2" r="1.5" fill="#555"/><circle cx="2.2" cy="6.7" r="1.5" fill="#555"/><circle cx="2.2" cy="11.4" r="1.5" fill="#555"/></svg>
<div class="a " style="top:422.48px;font-size:9.37px;line-height:11.71px;color:#1a96d2;right:968.00px;text-align:right;-webkit-text-stroke:0.5px #1a96d2;">2 - Needs Improvement</div>
<div class="a " style="top:422.52px;font-size:9.3px;line-height:11.62px;color:#626262;right:907.90px;text-align:right;">$4,194.56</div>
<div class="a " style="top:422.57px;font-size:9.22px;line-height:11.53px;color:#626262;right:843.70px;text-align:right;">$109,058.56</div>
<div class="a " style="top:422.77px;font-size:8.9px;line-height:11.12px;color:#626262;left:465.4px;">BWK</div>
<div class="a " style="top:422.83px;font-size:8.8px;line-height:11.0px;color:#626262;left:513px;">USD</div>
<div class="a " style="top:422.77px;font-size:8.9px;line-height:11.12px;color:#626262;left:579.3px;">GR-10</div>
<div class="a " style="top:422.52px;font-size:9.3px;line-height:11.62px;color:#626262;right:541.40px;text-align:right;">$4,144.80 - $5,744.64</div>
<div class="a" style="left:766.8px;top:419.82px;width:33.3px;height:14.8px;background:#f4a870"></div>
<div class="a " style="top:422.34px;font-size:9.6px;line-height:12.0px;color:#2f2f2f;right:490.70px;text-align:right;">84.83%</div>
<div class="a " style="top:422.52px;font-size:9.3px;line-height:11.62px;color:#626262;right:411.00px;text-align:right;">110.91%</div>
<div class="a " style="top:422.52px;font-size:9.3px;line-height:11.62px;color:#626262;right:317.30px;text-align:right;">83.71%</div>
<div class="a " style="top:422.58px;font-size:9.2px;line-height:11.5px;color:#626262;right:251.00px;text-align:right;">$3,170.19</div>
<div class="a " style="top:422.58px;font-size:9.2px;line-height:11.5px;color:#626262;right:183.00px;text-align:right;">$4,393.85</div>
<div class="a " style="top:422.52px;font-size:9.3px;line-height:11.62px;color:#626262;left:1126.4px;">0.00% - 0.00%</div>
<div class="a " style="top:422.70px;font-size:9.0px;line-height:11.25px;color:#626262;left:1201px;">$</div>
<div class="a" style="left:1208px;top:418.12px;width:63px;height:18px;border:1px solid #ededed;background:#fff"></div>
<div class="a " style="top:422.64px;font-size:9.1px;line-height:11.38px;color:#626262;right:28.60px;text-align:right;">0.00</div>
<div class="a" style="left:1286px;top:418.12px;width:20px;height:18px;border:1px solid #ededed;background:#fff"></div>
<div class="a" style="left:8px;top:471.90px;width:1288px;height:1px;background:#eeeeee"></div>
<svg class="a" style="left:14px;top:447.07px" width="22" height="21" viewBox="0 0 22 21"><rect width="22" height="21" fill="#f2ece9"/><ellipse cx="10" cy="8.5" rx="10" ry="9" fill="#7d4634"/><ellipse cx="12.5" cy="11.5" rx="6.8" ry="7.8" fill="#d9a591"/><path d="M9 16 Q12.5 18 15.5 15" stroke="#b05555" stroke-width="1" fill="none"/></svg>
<div class="a " style="top:451.50px;font-size:10.07px;line-height:12.59px;color:#1a96d2;left:38.3px;-webkit-text-stroke:0.35px #1a96d2;">Faith Marshall</div>
<svg class="a" style="left:106.04px;top:452.57px" width="13" height="10" viewBox="0 0 13 10"><rect x="0" y="0" width="13" height="9.5" rx="0.8" fill="#5e5e5e"/><rect x="1.5" y="1.5" width="4" height="2" fill="#d8d8d8"/><rect x="1.5" y="5" width="4" height="3" fill="#bdbdbd"/><rect x="7" y="1.5" width="4.5" height="1.2" fill="#d8d8d8"/><rect x="7" y="4" width="4.5" height="1.2" fill="#d8d8d8"/><rect x="7" y="6.5" width="4.5" height="1.2" fill="#d8d8d8"/></svg>
<svg class="a" style="left:143.5px;top:451.38px" width="14" height="12" viewBox="0 0 14 12"><path d="M1.5 1 H12.5 Q13 1 13 1.5 V8 Q13 8.5 12.5 8.5 H10.5 L9.5 10.8 L8 8.5 H1.5 Q1 8.5 1 8 V1.5 Q1 1 1.5 1 Z" fill="none" stroke="#555" stroke-width="1.3" stroke-linejoin="round"/></svg>
<svg class="a" style="left:164.5px;top:450.38px" width="5" height="14" viewBox="0 0 5 14"><circle cx="2.2" cy="2" r="1.5" fill="#555"/><circle cx="2.2" cy="6.7" r="1.5" fill="#555"/><circle cx="2.2" cy="11.4" r="1.5" fill="#555"/></svg>
<div class="a " style="top:452.73px;font-size:9.37px;line-height:11.71px;color:#1a96d2;right:968.00px;text-align:right;-webkit-text-stroke:0.5px #1a96d2;">3 - Meets Expectations</div>
<div class="a " style="top:452.77px;font-size:9.3px;line-height:11.62px;color:#626262;right:907.90px;text-align:right;">$21.18</div>
<div class="a " style="top:452.82px;font-size:9.22px;line-height:11.53px;color:#626262;right:843.70px;text-align:right;">$44,054.40</div>
<div class="a " style="top:453.02px;font-size:8.9px;line-height:11.12px;color:#626262;left:465.4px;">HOURLY</div>
<div class="a " style="top:453.08px;font-size:8.8px;line-height:11.0px;color:#626262;left:513px;">USD</div>
<div class="a " style="top:453.02px;font-size:8.9px;line-height:11.12px;color:#626262;left:579.3px;">H-04</div>
<div class="a " style="top:452.77px;font-size:9.3px;line-height:11.62px;color:#626262;right:541.40px;text-align:right;">$21.83 - $25.62</div>
<div class="a" style="left:766.8px;top:450.07px;width:35.0px;height:14.8px;background:#6fe59a"></div>
<div class="a " style="top:452.59px;font-size:9.6px;line-height:12.0px;color:#2f2f2f;right:490.70px;text-align:right;">89.32%</div>
<div class="a " style="top:452.77px;font-size:9.3px;line-height:11.62px;color:#626262;right:411.00px;text-align:right;">104.90%</div>
<div class="a " style="top:452.77px;font-size:9.3px;line-height:11.62px;color:#626262;right:317.30px;text-align:right;">80.80%</div>
<div class="a " style="top:452.83px;font-size:9.2px;line-height:11.5px;color:#626262;right:251.00px;text-align:right;">$18.57</div>
<div class="a " style="top:452.83px;font-size:9.2px;line-height:11.5px;color:#626262;right:183.00px;text-align:right;">$21.80</div>
<div class="a " style="top:452.77px;font-size:9.3px;line-height:11.62px;color:#626262;left:1126.4px;">3.00% - 5.00%</div>
<div class="a " style="top:452.95px;font-size:9.0px;line-height:11.25px;color:#626262;left:1201px;">$</div>
<div class="a" style="left:1208px;top:448.38px;width:63px;height:18px;border:1px solid #ededed;background:#fff"></div>
<div class="a " style="top:452.89px;font-size:9.1px;line-height:11.38px;color:#626262;right:28.60px;text-align:right;">0.64</div>
<div class="a" style="left:1286px;top:448.38px;width:20px;height:18px;border:1px solid #ededed;background:#fff"></div>
<div class="a" style="left:8px;top:502.15px;width:1288px;height:1px;background:#eeeeee"></div>
<svg class="a" style="left:14px;top:477.32px" width="22" height="21" viewBox="0 0 22 21"><rect width="22" height="21" fill="#fafafa"/><ellipse cx="11" cy="6" rx="4" ry="5" fill="#55321f"/><path d="M1.5 21 C1.5 13.5 20.5 13.5 20.5 21 Z" fill="#7d8ca0"/><path d="M8.5 12.5 L11 21 L13.5 12.5 Z" fill="#f0f2f4"/><path d="M10.2 13.5 L11 21 L11.8 13.5 Z" fill="#7e2430"/></svg>
<div class="a " style="top:481.75px;font-size:10.07px;line-height:12.59px;color:#1a96d2;left:38.3px;-webkit-text-stroke:0.35px #1a96d2;">Ben Shervin</div>
<svg class="a" style="left:97.66px;top:482.82px" width="13" height="10" viewBox="0 0 13 10"><rect x="0" y="0" width="13" height="9.5" rx="0.8" fill="#5e5e5e"/><rect x="1.5" y="1.5" width="4" height="2" fill="#d8d8d8"/><rect x="1.5" y="5" width="4" height="3" fill="#bdbdbd"/><rect x="7" y="1.5" width="4.5" height="1.2" fill="#d8d8d8"/><rect x="7" y="4" width="4.5" height="1.2" fill="#d8d8d8"/><rect x="7" y="6.5" width="4.5" height="1.2" fill="#d8d8d8"/></svg>
<svg class="a" style="left:143.5px;top:481.62px" width="14" height="12" viewBox="0 0 14 12"><path d="M1.5 1 H12.5 Q13 1 13 1.5 V8 Q13 8.5 12.5 8.5 H10.5 L9.5 10.8 L8 8.5 H1.5 Q1 8.5 1 8 V1.5 Q1 1 1.5 1 Z" fill="none" stroke="#555" stroke-width="1.3" stroke-linejoin="round"/></svg>
<svg class="a" style="left:164.5px;top:480.62px" width="5" height="14" viewBox="0 0 5 14"><circle cx="2.2" cy="2" r="1.5" fill="#555"/><circle cx="2.2" cy="6.7" r="1.5" fill="#555"/><circle cx="2.2" cy="11.4" r="1.5" fill="#555"/></svg>
<div class="a " style="top:482.98px;font-size:9.37px;line-height:11.71px;color:#1a96d2;right:968.00px;text-align:right;-webkit-text-stroke:0.5px #1a96d2;">3 - Meets Expectations</div>
<div class="a " style="top:483.02px;font-size:9.3px;line-height:11.62px;color:#626262;right:907.90px;text-align:right;">$5,006.25</div>
<div class="a " style="top:483.07px;font-size:9.22px;line-height:11.53px;color:#626262;right:843.70px;text-align:right;">$120,150.00</div>
<div class="a " style="top:483.27px;font-size:8.9px;line-height:11.12px;color:#626262;left:465.4px;">SMT</div>
<div class="a " style="top:483.33px;font-size:8.8px;line-height:11.0px;color:#626262;left:513px;">USD</div>
<div class="a " style="top:483.27px;font-size:8.9px;line-height:11.12px;color:#626262;left:579.3px;">GR-10</div>
<div class="a " style="top:483.02px;font-size:9.3px;line-height:11.62px;color:#626262;right:541.40px;text-align:right;">$4,490.20 - $6,223.36</div>
<div class="a" style="left:766.8px;top:480.32px;width:36.6px;height:14.8px;background:#5cdf8e"></div>
<div class="a " style="top:482.84px;font-size:9.6px;line-height:12.0px;color:#2f2f2f;right:490.70px;text-align:right;">93.46%</div>
<div class="a " style="top:483.02px;font-size:9.3px;line-height:11.62px;color:#626262;right:411.00px;text-align:right;">122.19%</div>
<div class="a " style="top:483.02px;font-size:9.3px;line-height:11.62px;color:#626262;right:317.30px;text-align:right;">118.58%</div>
<div class="a " style="top:483.08px;font-size:9.2px;line-height:11.5px;color:#626262;right:251.00px;text-align:right;">$3,434.38</div>
<div class="a " style="top:483.08px;font-size:9.2px;line-height:11.5px;color:#626262;right:183.00px;text-align:right;">$4,760.00</div>
<div class="a " style="top:483.02px;font-size:9.3px;line-height:11.62px;color:#626262;left:1126.4px;">2.00% - 4.00%</div>
<div class="a " style="top:483.20px;font-size:9.0px;line-height:11.25px;color:#626262;left:1201px;">$</div>
<div class="a" style="left:1208px;top:478.62px;width:63px;height:18px;border:1px solid #ededed;background:#fff"></div>
<div class="a " style="top:483.14px;font-size:9.1px;line-height:11.38px;color:#626262;right:28.60px;text-align:right;">100.13</div>
<div class="a" style="left:1286px;top:478.62px;width:20px;height:18px;border:1px solid #ededed;background:#fff"></div>
<div class="a" style="left:8px;top:532.40px;width:1288px;height:1px;background:#eeeeee"></div>
<svg class="a" style="left:14px;top:507.57px" width="22" height="21" viewBox="0 0 22 21"><rect width="22" height="21" fill="#e0cfc6"/><ellipse cx="10" cy="10" rx="8.5" ry="9.5" fill="#cfa36c"/><ellipse cx="12" cy="10.5" rx="5.5" ry="6.5" fill="#ecbca4"/><ellipse cx="17" cy="9" rx="4" ry="7" fill="#c98a98" opacity="0.7"/><path d="M2 21 C4 17 18 17 21 21 Z" fill="#3d66cf"/></svg>
<div class="a " style="top:512.00px;font-size:10.07px;line-height:12.59px;color:#1a96d2;left:38.3px;-webkit-text-stroke:0.35px #1a96d2;">Stephanie Thom</div>
<svg class="a" style="left:116.51px;top:513.08px" width="13" height="10" viewBox="0 0 13 10"><rect x="0" y="0" width="13" height="9.5" rx="0.8" fill="#5e5e5e"/><rect x="1.5" y="1.5" width="4" height="2" fill="#d8d8d8"/><rect x="1.5" y="5" width="4" height="3" fill="#bdbdbd"/><rect x="7" y="1.5" width="4.5" height="1.2" fill="#d8d8d8"/><rect x="7" y="4" width="4.5" height="1.2" fill="#d8d8d8"/><rect x="7" y="6.5" width="4.5" height="1.2" fill="#d8d8d8"/></svg>
<svg class="a" style="left:143.5px;top:511.88px" width="14" height="12" viewBox="0 0 14 12"><path d="M1.5 1 H12.5 Q13 1 13 1.5 V8 Q13 8.5 12.5 8.5 H10.5 L9.5 10.8 L8 8.5 H1.5 Q1 8.5 1 8 V1.5 Q1 1 1.5 1 Z" fill="none" stroke="#555" stroke-width="1.3" stroke-linejoin="round"/></svg>
<svg class="a" style="left:164.5px;top:510.88px" width="5" height="14" viewBox="0 0 5 14"><circle cx="2.2" cy="2" r="1.5" fill="#555"/><circle cx="2.2" cy="6.7" r="1.5" fill="#555"/><circle cx="2.2" cy="11.4" r="1.5" fill="#555"/></svg>
<div class="a " style="top:513.23px;font-size:9.37px;line-height:11.71px;color:#1a96d2;right:968.00px;text-align:right;-webkit-text-stroke:0.5px #1a96d2;">3 - Meets Expectations</div>
<div class="a " style="top:513.27px;font-size:9.3px;line-height:11.62px;color:#626262;right:907.90px;text-align:right;">$3,906.40</div>
<div class="a " style="top:513.32px;font-size:9.22px;line-height:11.53px;color:#626262;right:843.70px;text-align:right;">$101,566.37</div>
<div class="a " style="top:513.52px;font-size:8.9px;line-height:11.12px;color:#626262;left:465.4px;">BWK</div>
<div class="a " style="top:513.58px;font-size:8.8px;line-height:11.0px;color:#626262;left:513px;">USD</div>
<div class="a " style="top:513.52px;font-size:8.9px;line-height:11.12px;color:#626262;left:579.3px;">GR-09</div>
<div class="a " style="top:513.27px;font-size:9.3px;line-height:11.62px;color:#626262;right:541.40px;text-align:right;">$3,619.85 - $4,814.28</div>
<div class="a" style="left:766.8px;top:510.57px;width:37.4px;height:14.8px;background:#27d16b"></div>
<div class="a " style="top:513.09px;font-size:9.6px;line-height:12.0px;color:#2f2f2f;right:490.70px;text-align:right;">95.36%</div>
<div class="a " style="top:513.27px;font-size:9.3px;line-height:11.62px;color:#626262;right:411.00px;text-align:right;">111.89%</div>
<div class="a " style="top:513.27px;font-size:9.3px;line-height:11.62px;color:#626262;right:317.30px;text-align:right;">83.93%</div>
<div class="a " style="top:513.33px;font-size:9.2px;line-height:11.5px;color:#626262;right:251.00px;text-align:right;">$2,879.42</div>
<div class="a " style="top:513.33px;font-size:9.2px;line-height:11.5px;color:#626262;right:183.00px;text-align:right;">$4,103.08</div>
<div class="a " style="top:513.27px;font-size:9.3px;line-height:11.62px;color:#626262;left:1126.4px;">3.00% - 5.00%</div>
<div class="a " style="top:513.45px;font-size:9.0px;line-height:11.25px;color:#626262;left:1201px;">$</div>
<div class="a" style="left:1208px;top:508.88px;width:63px;height:18px;border:1px solid #ededed;background:#fff"></div>
<div class="a " style="top:513.39px;font-size:9.1px;line-height:11.38px;color:#626262;right:28.60px;text-align:right;">117.19</div>
<div class="a" style="left:1286px;top:508.88px;width:20px;height:18px;border:1px solid #ededed;background:#fff"></div>
<div class="a" style="left:8px;top:533.5px;width:190px;height:22px;background:#d9d9d9"></div>
<div class="a " style="top:540.31px;font-size:9.43px;line-height:11.79px;color:#333;right:1104.40px;text-align:right;">Group Total:</div>
<div class="a" style="left:973px;top:533.5px;width:147px;height:22px;background:#f3f7f1"></div>
<div class="a" style="left:1119.5px;top:533.5px;width:177px;height:22px;background:#d0f1ef"></div>
<div class="a " style="top:541.38px;font-size:9.33px;line-height:11.66px;color:#333;right:22.30px;text-align:right;">$19,615.52</div>
<div class="a" style="left:0;top:592px;width:1296px;height:75px;background:linear-gradient(#cfdce4 0,#d5e2e9 2px,#dae6ec 75px)"></div>
<div class="a" style="left:986px;top:564px;width:195px;height:20px;border:1px solid #bfc5c9;border-radius:2px;background:#fbfbfb"></div>
<svg class="a" style="left:994px;top:568.5px" width="12" height="11" viewBox="0 0 12 11"><path d="M0.5 5.5 H10.5 M6.5 1.5 L10.5 5.5 L6.5 9.5" fill="none" stroke="#1f5f8e" stroke-width="1.4"/></svg>
<div class="a " style="top:568.44px;font-size:10.85px;line-height:13.56px;color:#2a6a98;left:1008px;">Complete Compensation Planning</div>
<div class="a" style="left:1189px;top:564px;width:50px;height:20px;border:1px solid #bfc5c9;border-radius:2px;background:#fbfbfb"></div>
<div class="a " style="top:568.42px;font-size:10.9px;line-height:13.62px;color:#2a6a98;left:1063.50px;width:300px;text-align:center;">Cancel</div>
<div class="a" style="left:1247px;top:564px;width:40px;height:20px;border-radius:2px;background:#1089cf"></div>
<div class="a " style="top:568.84px;font-size:10.2px;line-height:12.75px;color:#fff;left:1117.20px;width:300px;text-align:center;">Save</div>
<div class="a" style="left:1280px;top:363px;width:16px;height:87px;background:#2c4a5c"></div>
<div class="a" style="left:1280px;top:363px;width:87px;height:16px;transform-origin:0 0;transform:translate(16px,0) rotate(90deg);text-align:center;line-height:16px;font-size:9.6px;color:#fff">Support</div>
<div class="a" style="left:189px;top:361px;width:123px;height:115px;background:#fff;border-radius:3px;box-shadow:0 0 3px rgba(0,0,0,0.22),0 2px 4px rgba(0,0,0,0.12)"></div>
<div class="a" style="left:185px;top:394px;width:9px;height:9px;background:#fff;transform:rotate(45deg);box-shadow:-1px 1px 2px rgba(0,0,0,0.12)"></div>
<div class="a" style="left:190px;top:390px;width:8px;height:16px;background:#fff"></div>
<div class="a " style="top:384.90px;font-size:9.3px;line-height:11.62px;color:#2f6e9d;left:200.3px;">Open Profile</div>
<div class="a " style="top:403.90px;font-size:9.3px;line-height:11.62px;color:#2f6e9d;left:200.3px;">Open Achievements</div>
<div class="a " style="top:422.40px;font-size:9.3px;line-height:11.62px;color:#2f6e9d;left:200.3px;">Promote</div>
<div class="a " style="top:440.94px;font-size:9.23px;line-height:11.54px;color:#2f6e9d;left:200.3px;">Performance x Potential</div>
<div class="a" style="left:208px;top:535px;width:765px;height:140px;background:#fff;border-left:2px solid #c9c9c9;border-right:1px solid #d5d5d5;box-shadow:0 0 2px rgba(0,0,0,0.12)"></div>
<div class="a" style="left:210px;top:535px;width:762px;height:30px;background:#ececec"></div>
<div class="a " style="top:544.24px;font-size:12.0px;line-height:15.0px;color:#555;left:433.00px;width:300px;text-align:center;">Metrics</div>
<svg class="a" style="left:950px;top:546px" width="10" height="10" viewBox="0 0 10 10"><path d="M1 1 L9 9 M9 1 L1 9" stroke="#777" stroke-width="1.1"/></svg>
<div class="a " style="top:584.03px;font-size:11.85px;line-height:14.81px;color:#333;left:269px;-webkit-text-stroke:0.3px #333;">Performance Distribution</div>
<div class="a" style="left:264px;top:601.0px;width:179px;height:1px;background:#c9dde6"></div>
<div class="a" style="left:264px;top:630.0px;width:179px;height:1px;background:#c9dde6"></div>
<div class="a" style="left:264px;top:659.5px;width:179px;height:1px;background:#c9dde6"></div>
<div class="a " style="top:596.77px;font-size:9.5px;line-height:11.88px;color:#444;right:1044.00px;text-align:right;">6</div>
<div class="a " style="top:625.77px;font-size:9.5px;line-height:11.88px;color:#444;right:1044.00px;text-align:right;">4</div>
<div class="a " style="top:654.77px;font-size:9.5px;line-height:11.88px;color:#444;right:1044.00px;text-align:right;">2</div>
<div class="a" style="left:343px;top:631px;width:21px;height:40px;background:#15b1e6"></div>
<div class="a" style="left:230px;top:667px;width:80px;height:12px;transform-origin:0 0;transform:rotate(-90deg);font-size:9.5px;color:#555;line-height:12px">Employees</div>
<div class="a " style="top:584.03px;font-size:11.85px;line-height:14.81px;color:#333;left:523.4px;-webkit-text-stroke:0.3px #333;">Pay / Performance Matrix</div>
<div class="a" style="left:475.5px;top:600px;width:79px;height:70px;background:#dcdcdf"></div>
<div class="a" style="left:586px;top:600px;width:1px;height:70px;background:#e4e4e8"></div>
<div class="a" style="left:619px;top:600px;width:1px;height:70px;background:#e4e4e8"></div>
<div class="a" style="left:652px;top:600px;width:1px;height:70px;background:#e4e4e8"></div>
<div class="a" style="left:685px;top:600px;width:1px;height:70px;background:#e4e4e8"></div>
<div class="a" style="left:718px;top:600px;width:1px;height:70px;background:#e4e4e8"></div>
<div class="a" style="left:554px;top:600px;width:164px;height:1px;background:#e4e4e8"></div>
<div class="a" style="left:554px;top:617.5px;width:164px;height:1px;background:#e4e4e8"></div>
<div class="a" style="left:554px;top:635px;width:164px;height:1px;background:#e4e4e8"></div>
<div class="a" style="left:554px;top:652px;width:164px;height:1px;background:#e4e4e8"></div>
<div class="a " style="top:604.19px;font-size:8.5px;line-height:10.62px;color:#444;left:479px;">&gt; 120%</div>
<div class="a " style="top:621.69px;font-size:8.5px;line-height:10.62px;color:#444;left:479px;">111% - 120%</div>
<div class="a " style="top:639.09px;font-size:8.5px;line-height:10.62px;color:#444;left:479px;">91% - 110%</div>
<div class="a " style="top:656.59px;font-size:8.5px;line-height:10.62px;color:#444;left:479px;">81% - 90%</div>
<div class="a " style="top:621.69px;font-size:8.5px;line-height:10.62px;color:#444;left:551.50px;width:300px;text-align:center;">1</div>
<div class="a " style="top:639.09px;font-size:8.5px;line-height:10.62px;color:#444;left:485.50px;width:300px;text-align:center;">4</div>
<div class="a " style="top:656.59px;font-size:8.5px;line-height:10.62px;color:#444;left:453.00px;width:300px;text-align:center;">1</div>
<div class="a " style="top:656.59px;font-size:8.5px;line-height:10.62px;color:#444;left:518.50px;width:300px;text-align:center;">1</div>
<div class="a" style="left:460px;top:660px;width:30px;height:12px;transform-origin:0 0;transform:rotate(-90deg);font-size:8.5px;color:#555;line-height:12px">Pay</div>
<div class="a " style="top:584.12px;font-size:11.7px;line-height:14.62px;color:#333;left:806.3px;-webkit-text-stroke:0.3px #333;">Merit Increase</div>
<div class="a" style="left:786px;top:601.0px;width:165px;height:1px;background:#c9dde6"></div>
<div class="a" style="left:786px;top:630.0px;width:165px;height:1px;background:#c9dde6"></div>
<div class="a" style="left:786px;top:659.5px;width:165px;height:1px;background:#c9dde6"></div>
<div class="a " style="top:597.20px;font-size:8.8px;line-height:11.0px;color:#444;right:521.40px;text-align:right;">7.5%</div>
<div class="a " style="top:626.20px;font-size:8.8px;line-height:11.0px;color:#444;right:521.40px;text-align:right;">5%</div>
<div class="a " style="top:655.20px;font-size:8.8px;line-height:11.0px;color:#444;right:521.40px;text-align:right;">2.5%</div>
<div class="a" style="left:859.5px;top:659.5px;width:19px;height:10px;background:#15b1e6"></div>
<div class="a" style="left:893px;top:631px;width:19px;height:40px;background:#15b1e6"></div>
<div class="a" style="left:925.5px;top:631px;width:19px;height:40px;background:#15b1e6"></div>
<div class="a" style="left:738.5px;top:684px;width:90px;height:13px;transform-origin:0 0;transform:rotate(-90deg);font-size:9.6px;color:#555;line-height:13px">Average Increase</div>
</body></html>
